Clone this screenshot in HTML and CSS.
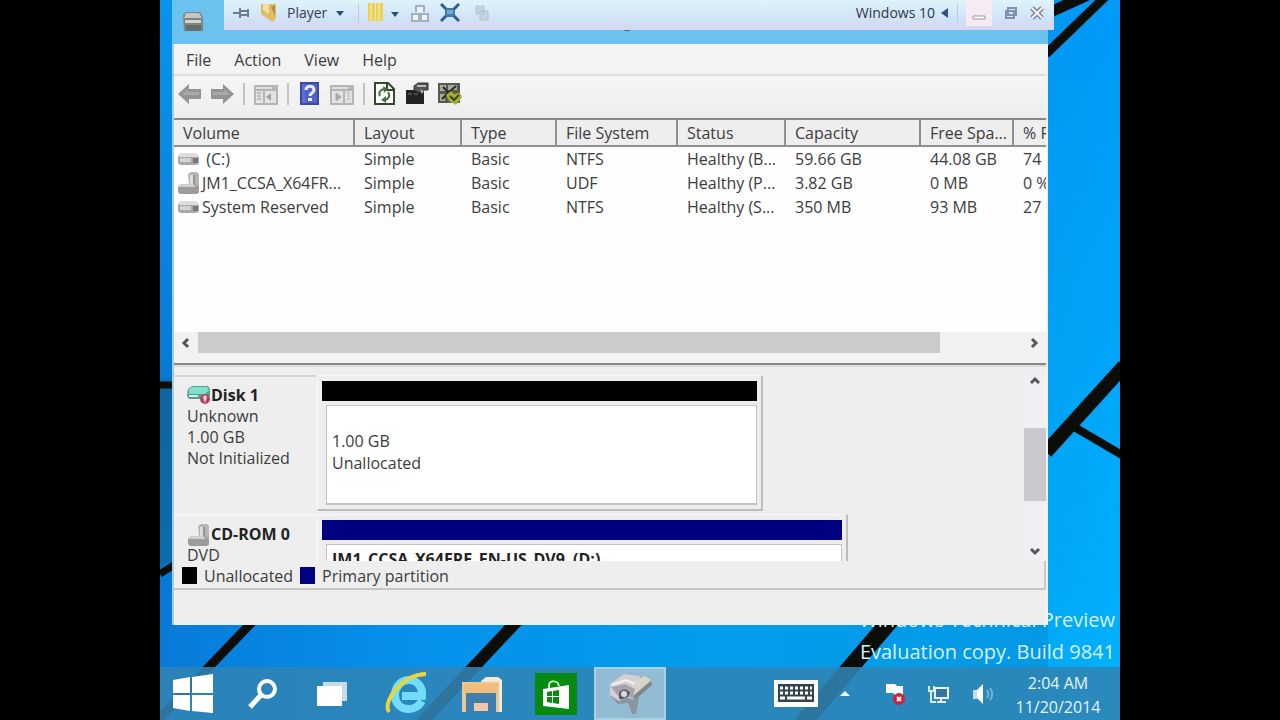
FILE: index.html
```html
<!DOCTYPE html>
<html lang="en">
<head>
<meta charset="utf-8">
<title>Disk Management</title>
<link rel="stylesheet" href="styles.css">
</head>
<body>
<svg class="defs" aria-hidden="true">
  <symbol id="drive" viewBox="0 0 22 16">
    <path d="M3 2h15l3 4v6l-2 2H2l-2-2V6z" fill="#a9a9a9"/><path d="M3 2h15l3 4H1z" fill="#dedede"/><path d="M2 7h11v4H2z" fill="#d2d2d2"/><path d="M15 7h5v5h-5z" fill="#777"/>
  </symbol>
  <symbol id="optical" viewBox="0 0 22 22">
    <path d="M10 2l3-2h6l2 2v19h-9z" fill="#b5b5b5"/><path d="M12 3h5v10h-5z" fill="#dedede"/><path d="M15 3h2v11h-2z" fill="#969696"/><path d="M3 12h14l4 3v5l-2 2H2l-2-2v-5z" fill="#9c9c9c"/><path d="M3 12h12l3 3H1z" fill="#cfcfcf"/>
  </symbol>
</svg>
<div class="desktop">
  <svg class="wallpaper" viewBox="0 0 960 720" preserveAspectRatio="none" aria-hidden="true">
    <defs>
      <linearGradient id="sky" x1="0" y1="0" x2="1" y2="0"><stop offset="0" stop-color="#087bd8"/><stop offset=".25" stop-color="#0590ec"/><stop offset=".6" stop-color="#049deb"/><stop offset=".92" stop-color="#0499e5"/><stop offset="1" stop-color="#00a8fb"/></linearGradient>
      <linearGradient id="edge" x1="0" y1="0" x2="0" y2="1"><stop offset="0" stop-color="#0a94ec"/><stop offset=".52" stop-color="#087ad6"/><stop offset=".54" stop-color="#0e65a0"/><stop offset=".78" stop-color="#0a6cb0"/><stop offset=".8" stop-color="#0879d8"/><stop offset="1" stop-color="#087bd8"/></linearGradient>
      <linearGradient id="right" x1="0" y1="0" x2="0" y2="1"><stop offset="0" stop-color="#0094f8" stop-opacity=".7"/><stop offset="1" stop-color="#00b8ff" stop-opacity=".6"/></linearGradient>
    </defs>
    <path fill="url(#sky)" d="M0 0h960v720H0z"/>
    <path fill="url(#edge)" d="M0 0h14v720H0z"/>
    <path fill="url(#right)" d="M888 0h72v720h-72z"/>
    <g stroke="#0a0d08" fill="none">
      <path d="M0 385h14" stroke-width="7"/><path d="M0 574l14-9" stroke-width="7"/>
      <path d="M96 618L-4 722" stroke-width="9"/><path d="M360 618L262 722" stroke-width="12"/>
      <path d="M736 614L642 724" stroke-width="17"/>
      <path d="M886 54L946-4" stroke-width="9"/><path d="M886 14L930-6" stroke-width="11"/>
      <path d="M886 452L964 366" stroke-width="14"/><path d="M916 428l46 27" stroke-width="8"/>
    </g>
  </svg>
  <div class="watermark">Windows Technical Preview<br>Evaluation copy. Build 9841</div>

  <main class="workspace">
    <section class="window">
      <header class="titlebar">
        <svg width="22" height="22" viewBox="0 0 22 22" aria-hidden="true"><path d="M1 4l3-3h14l3 5v14H2z" fill="#7e8384"/><path d="M4 2h13l3 5H2z" fill="#c5c5c0"/><path d="M3 9h16v3H3z" fill="#d4d4ce"/><path d="M4 14h15v6H4z" fill="#666c6e"/></svg>
        <h1 class="title">Disk Management</h1>
      </header>
      <nav class="menu">
        <button>File</button><button>Action</button><button>View</button><button>Help</button>
      </nav>
      <div class="toolbar">
        <button aria-label="Back"><svg viewBox="0 0 24 24"><path d="M0 12L11 2v5h12v10H11v5z" fill="#949494"/><path d="M4 12l6-5v3h11v3H6z" fill="#a9a9a9"/></svg></button>
        <button aria-label="Forward"><svg viewBox="0 0 24 24"><path d="M24 12L13 2v5H1v10h12v5z" fill="#949494"/><path d="M20 12l-6-5v3H3v3h15z" fill="#a9a9a9"/></svg></button>
        <span class="sep"></span>
        <button aria-label="Show console tree"><svg viewBox="0 0 24 24"><path d="M0 3h24v20H0z" fill="#b5b5b5"/><path d="M2 5h16v2H2z" fill="#ddd"/><path d="M2 9h7v12H2zM11 9h11v12H11z" fill="#e3e3e3"/><path d="M3 11h4M3 14h4M3 17h4" stroke="#bbb" stroke-width="2"/><path d="M17 11v8l-5-4z" fill="#a2a2a2"/></svg></button>
        <span class="sep"></span>
        <button aria-label="Help topics"><svg viewBox="0 0 24 24"><path d="M2 0h19v23H2z" fill="#3b49a6"/><path d="M4 2h3v19H4z" fill="#5e70d0"/><path d="M7 2h12v19H7z" fill="#5163c7"/><path d="M8 8c0-5 8-5 8 0 0 3-4 3-4 6" stroke="#e8eaff" stroke-width="3" fill="none"/><path d="M10 16h4v3h-4z" fill="#e8eaff"/></svg></button>
        <button aria-label="Show action pane"><svg viewBox="0 0 24 24"><path d="M0 3h24v20H0z" fill="#b5b5b5"/><path d="M2 5h16v2H2z" fill="#ddd"/><path d="M2 9h11v12H2zM15 9h7v12h-7z" fill="#e3e3e3"/><path d="M6 11l5 4-5 4zM17 11h3M17 14h3M17 17h3" fill="#aaa" stroke="#aaa"/></svg></button>
        <span class="sep"></span>
        <button aria-label="Refresh"><svg viewBox="0 0 24 24"><path d="M1 1h13l6 6v15H1z" fill="#fff" stroke="#39452f" stroke-width="2"/><path d="M13 1v7h7" fill="none" stroke="#39452f" stroke-width="2"/><path d="M6 14c-2-4 1-7 5-7M14 10c3 4 0 8-4 8" stroke="#407044" stroke-width="2" fill="none"/><path d="M9 4l5 3-4 4zM12 14l-5 4 5 3z" fill="#407044"/></svg></button>
        <button aria-label="Properties"><svg viewBox="0 0 24 24"><path d="M0 8h18v14H0z" fill="#222"/><path d="M8 8V4l4-3h10v7h-4l-3 3" fill="#555" stroke="#333"/><path d="M11 3h9v2h-9z" fill="#bbb"/><path d="M2 12h4M8 12h4" stroke="#777"/><path d="M14 7l4 2-2 3z" fill="#aaa"/></svg></button>
        <button aria-label="Settings"><svg viewBox="0 0 24 24"><path d="M0 1h22v20H0z" fill="#565a52"/><path d="M2 3h6v6H2zM10 3h9v5h-9zM2 12h5v7H2z" fill="#aaa99c"/><path d="M5 5l7 7M4 17l6-6M18 4l-7 6" stroke="#272b28" stroke-width="2"/><path d="M8 13l5-4 3 3 6-1 2 4-6 8-7-4z" fill="#a6ae30"/><path d="M12 14l4 4 5-5" stroke="#3e4218" stroke-width="2" fill="none"/></svg></button>
      </div>

      <div class="volumes">
        <div class="list">
          <table>
            <colgroup><col class="c-vol"><col class="c-lay"><col class="c-type"><col class="c-fs"><col class="c-stat"><col class="c-cap"><col class="c-free"><col></colgroup>
            <thead><tr><th>Volume</th><th>Layout</th><th>Type</th><th>File System</th><th>Status</th><th>Capacity</th><th>Free Spa...</th><th>% F</th></tr></thead>
            <tbody>
              <tr><td><svg class="vicon"><use href="#drive"/></svg>&nbsp;(C:)</td><td>Simple</td><td>Basic</td><td>NTFS</td><td>Healthy (B...</td><td>59.66 GB</td><td>44.08 GB</td><td>74</td></tr>
              <tr><td><svg class="vicon"><use href="#optical"/></svg>JM1_CCSA_X64FR...</td><td>Simple</td><td>Basic</td><td>UDF</td><td>Healthy (P...</td><td>3.82 GB</td><td>0 MB</td><td>0 %</td></tr>
              <tr><td><svg class="vicon"><use href="#drive"/></svg>System Reserved</td><td>Simple</td><td>Basic</td><td>NTFS</td><td>Healthy (S...</td><td>350 MB</td><td>93 MB</td><td>27</td></tr>
            </tbody>
          </table>
        </div>
        <div class="hscroll">
          <button aria-label="Scroll left"><svg viewBox="0 0 12 12"><path d="M8 2L4 6l4 4"/></svg></button>
          <div class="track"><div class="thumb"></div></div>
          <button aria-label="Scroll right"><svg viewBox="0 0 12 12"><path d="M4 2l4 4-4 4"/></svg></button>
        </div>
      </div>

      <div class="graph">
        <div class="disks">
          <article class="disk">
            <div class="info">
              <h2><svg viewBox="0 0 24 20"><path d="M1 3l4-3h16l2 3v7l-3 3H2l-2-3z" fill="#589e95"/><path d="M2 3l3-2h15l2 3-4 4H2z" fill="#7fe0cb"/><path d="M2 9h9v2H2z" fill="#d7eee8"/><circle cx="18" cy="13" r="5" fill="#b24463"/><path d="M16 11l2-2 2 2-2 6z" fill="#f5d2db"/></svg>Disk 1</h2>
              <p>Unknown</p><p>1.00 GB</p><p>Not Initialized</p>
            </div>
            <div class="frame" style="width:52.5%">
              <div class="bar unallocated"></div>
              <div class="part"><p>1.00 GB</p><p>Unallocated</p></div>
            </div>
          </article>
          <article class="disk">
            <div class="info">
              <h2><svg viewBox="0 0 22 22"><use href="#optical"/></svg>CD-ROM 0</h2>
              <p>DVD</p>
            </div>
            <div class="frame" style="width:62.5%">
              <div class="bar primary"></div>
              <div class="part named"><p><b>JM1_CCSA_X64FRE_EN-US_DV9 &nbsp;(D:)</b></p></div>
            </div>
          </article>
        </div>
        <div class="vscroll">
          <button aria-label="Scroll up"><svg viewBox="0 0 12 12"><path d="M2 8l4-4 4 4"/></svg></button>
          <div class="track"><div class="thumb"></div></div>
          <button aria-label="Scroll down"><svg viewBox="0 0 12 12"><path d="M2 4l4 4 4-4"/></svg></button>
        </div>
      </div>
      <div class="legend"><span class="swatch unallocated"></span><span>Unallocated</span><span class="swatch primary"></span><span>Primary partition</span></div>
      <footer class="status"></footer>
    </section>
  </main>

  <div class="player">
    <svg width="18" height="14" viewBox="0 0 18 14" aria-hidden="true"><path d="M0 7h6M7 2v10M7 5h7M7 9h7M15 3v8" stroke="#6f7b8a" stroke-width="2" fill="none"/></svg>
    <svg width="20" height="20" viewBox="0 0 20 20" aria-hidden="true"><path d="M2 1h15v14l-3 4-5-3-7-5z" fill="#dfbd68"/><path d="M4 1h6v10L4 7z" fill="#f3dfa0"/><path d="M12 4l4-2v11z" fill="#b88d38"/></svg>
    <button class="pmenu">Player<svg width="8" height="5" viewBox="0 0 8 5"><path d="M0 0h8L4 5z" fill="#274e82"/></svg></button>
    <span class="psep"></span>
    <button aria-label="Pause"><svg width="36" height="20" viewBox="0 0 36 20"><path d="M1 0h7v18H1zM9 0h7v18H9z" fill="#ecd057"/><path d="M3 0h2v18H3zM11 0h2v18h-2z" fill="#f6e27a"/><path d="M24 9h8l-4 5z" fill="#274e82"/></svg></button>
    <button aria-label="Send keys"><svg width="18" height="18" viewBox="0 0 18 18"><path d="M1 10h7v7H1zM10 10h7v7h-7zM5 8V2h8v6" fill="#eef3f8" stroke="#a3b1bf" stroke-width="2"/></svg></button>
    <button class="full" aria-label="Full screen"><svg width="20" height="20" viewBox="0 0 20 20"><path d="M5 5h10v9H5z" fill="#3e7cac"/><path d="M1 1l5 5M19 1l-5 5M1 18l5-5M19 18l-5-5" stroke="#315e91" stroke-width="3"/><path d="M7 7h6v4H7z" fill="#74acd0"/></svg></button>
    <button class="unity" aria-label="Unity"><svg width="16" height="18" viewBox="0 0 16 18"><path d="M2 2h8v8H2zM6 7h8v9H6z" fill="#c3d3df" stroke="#b2c4d2"/></svg></button>
    <span class="pname">Windows 10<svg width="8" height="10" viewBox="0 0 8 10"><path d="M7 0v10L0 5z" fill="#344f80"/></svg></span>
    <span class="psep"></span>
    <button class="min" aria-label="Minimize"><svg width="14" height="14" viewBox="0 0 14 14"><path d="M1 9h12v3H1z" fill="#fff" stroke="#a3919e"/></svg></button>
    <button aria-label="Restore"><svg width="14" height="14" viewBox="0 0 14 14"><path d="M4 2h8v7H4zM2 5h8v7H2z" fill="#dce3ee" stroke="#8291ad" stroke-width="2"/></svg></button>
    <button aria-label="Close"><svg width="14" height="14" viewBox="0 0 14 14"><path d="M2 2l10 10M12 2L2 12" stroke="#7d8798" stroke-width="5"/><path d="M2 2l10 10M12 2L2 12" stroke="#f5f7fa" stroke-width="2"/></svg></button>
  </div>

  <div class="taskbar">
    <button class="sys start" aria-label="Start"><svg width="40" height="40" viewBox="0 0 40 40"><path d="M0 6l17-3v16H0zM19 3l21-3v19H19zM0 21h17v16L0 34zM19 21h21v18l-21-2z" fill="#fff"/></svg></button>
    <button class="sys" aria-label="Search"><svg width="30" height="30" viewBox="0 0 30 30"><circle cx="20" cy="10" r="8" fill="none" stroke="#fff" stroke-width="4"/><path d="M14 16L3 28" stroke="#fff" stroke-width="5"/></svg></button>
    <button class="sys" aria-label="Task view"><svg width="30" height="26" viewBox="0 0 30 26"><path d="M6 1h24v19H6z" fill="#cbdbe6"/><path d="M0 5h25v20H0z" fill="#fff"/></svg></button>
    <button class="app ie" aria-label="Internet Explorer"><svg width="46" height="46" viewBox="0 0 46 46"><path d="M37 30c-3 5-7 8-13 8-9 0-14-6-14-14S16 9 24 9s14 7 13 16H17" fill="none" stroke="#74dcfb" stroke-width="8"/><path d="M4 41C-3 30 18 3 41 3" fill="none" stroke="#e9d63a" stroke-width="4"/></svg></button>
    <button class="app" aria-label="File Explorer"><svg width="42" height="38" viewBox="0 0 42 38"><path d="M20 6l5-4h12l4 3v32h-4V8H20z" fill="#f4ead2"/><path d="M1 7h37v30h-4V18H5v19H1z" fill="#e9c794"/><path d="M3 9h34v9H3z" fill="#f1bd7b"/><path d="M5 18h30v19H5z" fill="#3f7fae"/><path d="M13 28h14v8H13z" fill="#f0c8a8"/></svg></button>
    <button class="app" aria-label="Store"><svg width="42" height="42" viewBox="0 0 42 42"><path d="M0 0h42v42H0z" fill="#078a10"/><path d="M14 15v-3c0-5 9-5 10 1" fill="none" stroke="#b8eab8" stroke-width="2"/><path d="M8 16l26-4v24L8 33z" fill="#fff"/><path d="M12 19l5-1v5h-5zM18 18l6-1v6h-6zM12 24h5v6l-5-1zM18 24h6v7l-6-1z" fill="#078a10"/></svg></button>
    <button class="app active" aria-label="Disk Management"><svg width="46" height="44" viewBox="0 0 46 44"><path d="M3 12L17 2l16 2-6 20-16 6-8-7z" fill="#d4cfd4"/><path d="M24 11L38 4l6 4-18 16z" fill="#d9d4c8"/><path d="M26 24L44 9l1 4-17 15z" fill="#858783"/><path d="M4 15l14-3 10 5-2 8H12z" fill="#a8a3aa"/><path d="M12 21c3-5 9-4 11 0l-4 7-7-1z" fill="#5f5c68"/><path d="M3 23l8 9 10-1 4 11h4l3-17-7 3-6-3-7 4z" fill="#8b969d"/><circle cx="17" cy="22" r="3" fill="#dcdce2"/><path d="M5 13l14-5 9 4" stroke="#f4f0f4" stroke-width="2" fill="none"/></svg></button>
    <div class="tray">
      <button aria-label="Touch keyboard"><svg width="44" height="27" viewBox="0 0 44 27"><path d="M0 0h44v27H0z" fill="#fff"/><path d="M4 4h36v18H4z" fill="#33444e"/><path d="M6 8h32M6 13h32" stroke="#fff" stroke-width="3" stroke-dasharray="3 2"/><path d="M6 18h5M13 18h18M33 18h5" stroke="#fff" stroke-width="3"/></svg></button>
      <button aria-label="Show hidden icons"><svg width="10" height="5" viewBox="0 0 10 5"><path d="M0 5h10L5 0z" fill="#fff"/></svg></button>
      <button class="flag" aria-label="Action Center"><svg width="22" height="24" viewBox="0 0 22 24"><path d="M2 2h9l2 2h6v9h-8l-2-2H2z" fill="#fff"/><circle cx="15" cy="17" r="6" fill="#d52034"/><path d="M13 15l4 4M17 15l-4 4" stroke="#fff" stroke-width="2"/></svg></button>
      <button aria-label="Network"><svg width="22" height="22" viewBox="0 0 22 22"><path d="M7 5h13v10H7zM13 15v4M9 19h9" fill="#33769f" stroke="#e9f3f8" stroke-width="2"/><path d="M1 3v5h5V3M3 8v11h5" fill="none" stroke="#dbeaf3" stroke-width="2"/></svg></button>
      <button aria-label="Volume"><svg width="24" height="24" viewBox="0 0 24 24"><path d="M1 8h4v9H1z" fill="#c5dbe7"/><path d="M5 8l6-6v20l-6-6z" fill="#fff"/><path d="M15 8c2 3 2 5 0 8M18 6c3 4 3 8 0 12" fill="none" stroke="#78b3d3" stroke-width="2"/></svg></button>
      <div class="clock"><span>2:04 AM</span><span>11/20/2014</span></div>
    </div>
  </div>
</div>
</body>
</html>
```

FILE: styles.css
```css
* { box-sizing: border-box; }
body { margin: 0; background: #000; color: #3c3c3c; font: 16px/22px "Open Sans", "Noto Sans", sans-serif; }
h1, h2, p { margin: 0; font-size: inherit; }
button { margin: 0; padding: 0; border: 0; background: none; color: inherit; font: inherit; }
svg { display: block; flex: none; }
.defs { position: absolute; width: 0; height: 0; }

.desktop { position: relative; display: flex; flex-direction: column; height: 100vh; margin: 0 12.5%; overflow: hidden; }
.wallpaper { position: absolute; inset: 0; width: 100%; height: 100%; }
.watermark { position: absolute; right: 5px; bottom: 52px; color: #d3f2ff; font-size: 20px; line-height: 32px; text-align: right; white-space: nowrap; }
.workspace { position: relative; flex: 1; display: flex; min-height: 0; padding: 0 72px 42px 12px; }

.window { flex: 1; display: flex; flex-direction: column; min-width: 0; background: #eee; border-right: 2px solid #f4f4fa; border-left: 2px solid #a4cbe0; }
.titlebar { display: flex; align-items: center; height: 44px; margin: 0 -2px; padding-left: 10px; background: #6cc2ee; }
.title { flex: 1; margin-right: 32px; padding-bottom: 4px; color: #3f6a84; font-size: 19px; font-weight: 400; text-align: center; }
.menu { display: flex; gap: 23px; height: 32px; padding: 2px 12px 0; background: #f3f3f3; border-bottom: 2px solid #dedede; }
.toolbar { display: flex; align-items: center; gap: 8px; height: 42px; padding: 0 4px 6px; background: linear-gradient(#f5f5f5, #eee); }
.toolbar svg { width: 24px; height: 24px; }
.sep { width: 2px; height: 22px; margin: 0 1px; background: #c4c4c4; }

.volumes { flex: 1; display: flex; flex-direction: column; min-height: 0; background: #fefefe; border-top: 2px solid #888; border-bottom: 2px solid #888; }
.list { flex: 1; min-height: 0; overflow: hidden; }
table { width: 100%; table-layout: fixed; border-collapse: separate; border-spacing: 0; }
.c-vol { width: 181px; } .c-lay { width: 107px; } .c-type { width: 95px; } .c-fs { width: 121px; }
.c-stat { width: 108px; } .c-cap { width: 135px; } .c-free { width: 93px; }
th, td { height: 24px; padding: 0 0 0 9px; overflow: hidden; font-weight: 400; line-height: 24px; text-align: left; white-space: nowrap; }
th { height: 27px; padding-top: 1px; background: #eee; border-right: 2px solid #909090; border-bottom: 2px solid #909090; }
th:last-child { border-right: 0; }
td:first-child { display: flex; align-items: center; gap: 2px; padding-left: 4px; }
.vicon { width: 22px; height: 22px; }

.hscroll { display: flex; align-items: center; height: 31px; padding-bottom: 10px; background: #f2f2f2; }
.hscroll button { display: flex; justify-content: center; width: 24px; }
.hscroll .track { flex: 1; }
.hscroll .thumb { width: 90%; height: 21px; background: #cbcbcb; }
.hscroll svg, .vscroll svg { width: 12px; height: 12px; fill: none; stroke: #55555d; stroke-width: 3; }

.graph { display: flex; height: 196px; padding-top: 8px; border-top: 2px solid #ddd; }
.disks { flex: 1; min-width: 0; overflow: hidden; }
.disk { display: flex; height: 139px; }
.info { width: 143px; margin-bottom: 3px; padding: 8px 0 0 13px; border-top: 2px solid #d5d5d5; line-height: 21px; white-space: nowrap; }
.disk + .disk .info { border-top-color: #f6f6f6; }
.info h2 { display: flex; align-items: center; height: 21px; color: #222; font-weight: 700; }
.info h2 svg { width: 24px; height: 22px; }
.frame { display: flex; flex-direction: column; margin-bottom: 3px; padding: 5px 4px 4px; border: 1px solid #bdbdbd; border-top-color: #f7f7f7; border-left-color: #f7f7f7; border-right-width: 2px; border-bottom-width: 2px; }
.bar { height: 20px; }
.unallocated { background: #000; }
.primary { background: #000080; }
.part { flex: 1; display: flex; flex-direction: column; justify-content: center; margin: 4px 0 0 4px; padding: 0 0 6px 5px; background: #fff; border: 1px solid #c2c2c2; border-bottom-width: 2px; }
.named { justify-content: flex-start; padding-top: 3px; color: #222; white-space: nowrap; }

.vscroll { display: flex; flex-direction: column; align-items: center; width: 22px; padding-bottom: 4px; background: #f0f0f4; }
.vscroll button { height: 12px; }
.vscroll .track { flex: 1; width: 100%; padding-top: 41px; }
.vscroll .thumb { height: 73px; background: #cacace; }

.legend { display: flex; align-items: center; gap: 7px; height: 29px; padding: 2px 8px 0; border-right: 2px solid #c9c9c9; border-bottom: 2px solid #c6c6c6; }
.swatch { width: 15px; height: 17px; }
.status { height: 35px; }

.player { position: absolute; top: 0; left: 64px; right: 66px; display: flex; align-items: center; gap: 8px; height: 30px; padding: 0 10px 4px 9px; background: linear-gradient(#dff3fb, #cfe1f6 70%, #d8d6f0); color: #35414f; font-size: 14px; }
.pmenu, .pname { display: flex; align-items: center; gap: 8px; }
.pmenu { gap: 9px; padding-right: 6px; }
.pname { gap: 6px; margin-left: auto; color: #2c3848; }
.psep { width: 1px; height: 20px; background: #b9cadb; }
.full { margin-left: 3px; }
.unity { margin-left: 6px; }
.min { display: flex; justify-content: center; width: 26px; height: 26px; padding-top: 7px; background: #f6eaf3; }
.min ~ button { margin-left: 4px; }

.taskbar { position: relative; display: flex; gap: 2px; height: 53px; background: rgba(48, 132, 180, .88); color: #e4f5fc; }
.taskbar button { display: flex; align-items: center; justify-content: center; }
.sys { width: 68px; }
.start { width: 66px; }
.app { width: 72px; }
.ie { margin-left: 4px; }
.taskbar .active { background: #91bcd4; border: 2px solid #a9d0e3; }
.tray { display: flex; align-items: center; gap: 22px; margin-left: auto; padding-right: 6px; }
.flag { margin-left: 12px; }
.clock { display: flex; flex-direction: column; width: 112px; margin-left: -16px; padding: 3px 0 0; line-height: 24px; text-align: center; }
```
